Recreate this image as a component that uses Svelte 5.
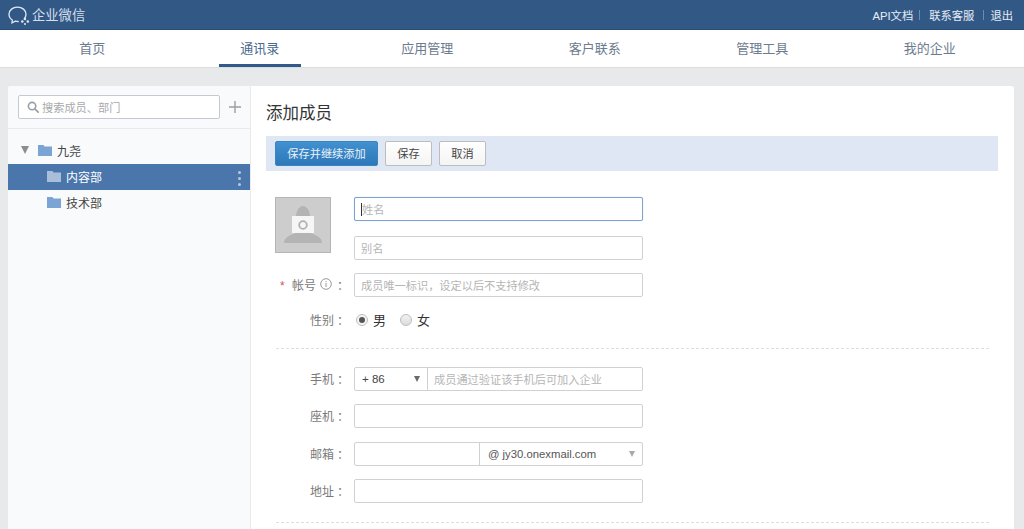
<script>
  const tabs = ['首页', '通讯录', '应用管理', '客户联系', '管理工具', '我的企业'];
</script>

<div class="page">
  <header class="top">
    <div class="brand">
      <svg class="logo" width="24" height="20" viewBox="0 0 24 20" fill="none" stroke="#dfe8f2" stroke-width="1.3">
        <path d="M16.200 14.100C17.200 12.800 18 11.500 18 9.300 18 5.100 14.200 2.100 9.500 2.100S1 5.100 1 9.300c0 2.500 1.300 4.500 3.300 5.700L4 17.800l3.200-1.700c1 .3 2 .4 3 .4" stroke-linecap="round"/>
        <circle cx="14.300" cy="16.500" r="1.300" fill="#dfe8f2" stroke="none"/>
        <circle cx="19.800" cy="16.500" r="1.300" fill="#dfe8f2" stroke="none"/>
        <circle cx="17" cy="14" r="1.200" fill="#dfe8f2" stroke="none"/>
        <circle cx="17" cy="19" r="1" fill="#dfe8f2" stroke="none"/>
      </svg>
      <span>企业微信</span>
    </div>
    <div class="links">
      <span>API文档</span><i></i><span>联系客服</span><i class="alt"></i><span>退出</span>
    </div>
  </header>

  <nav class="tabs">
    {#each tabs as t, i}
      <div class="tab" class:active={i === 1}><span>{t}</span></div>
    {/each}
  </nav>

  <main class="card">
    <aside class="side">
      <div class="search-row">
        <div class="search">
          <svg width="12" height="12" viewBox="0 0 13 13" fill="none" stroke="#9a9fa6" stroke-width="1.800">
            <circle cx="5.500" cy="5.500" r="4"/><path d="M8.500 8.500l3.600 3.600" stroke-linecap="round"/>
          </svg>
          <span>搜索成员、部门</span>
        </div>
        <svg class="plus" width="12" height="12" viewBox="0 0 12 12" stroke="#9a9fa6" stroke-width="1.400"><path d="M6 0v12M0 6h12"/></svg>
      </div>
      <div class="tree">
        <div class="node root">
          <span class="tri"></span>
          <svg class="folder" width="14" height="12" viewBox="0 0 14 12"><path d="M0 1h5.500l1 1.500H14V12H0z" fill="#7ba3d3"/></svg>
          <span>九尧</span>
        </div>
        <div class="node child sel">
          <svg class="folder" width="14" height="12" viewBox="0 0 14 12"><path d="M0 1h5.500l1 1.500H14V12H0z" fill="#a9bfd9"/></svg>
          <span>内容部</span>
          <div class="dots"><b></b><b></b><b></b></div>
        </div>
        <div class="node child">
          <svg class="folder" width="14" height="12" viewBox="0 0 14 12"><path d="M0 1h5.500l1 1.500H14V12H0z" fill="#7ba3d3"/></svg>
          <span>技术部</span>
        </div>
      </div>
    </aside>

    <section class="content">
      <h1>添加成员</h1>
      <div class="toolbar">
        <button class="btn primary">保存并继续添加</button>
        <button class="btn">保存</button>
        <button class="btn">取消</button>
      </div>

      <div class="form">
        <div class="identity">
          <div class="avatar">
            <svg width="56" height="56" viewBox="0 0 56 56">
              <rect width="56" height="56" fill="#cdcdcd"/>
              <path d="M21 20c0-6 3-11 7-11s7 5 7 11v6H21z" fill="#b4b4b4"/>
              <path d="M9 46c0-5 5-8 12-10h14c7 2 12 5 12 10z" fill="#b4b4b4"/>
              <rect x="17" y="19" width="22" height="17" fill="#f6f6f6"/>
              <circle cx="28" cy="28" r="3.800" fill="none" stroke="#b0b0b0" stroke-width="1.800"/>
            </svg>
          </div>
          <div class="names">
            <div class="input focus"><i class="caret"></i><span class="ph">姓名</span></div>
            <div class="input"><span class="ph">别名</span></div>
          </div>
        </div>

        <div class="row r-account">
          <label><em>*</em><span class="lt">帐号</span><svg class="info" width="12" height="12" viewBox="0 0 12 12" fill="none" stroke="#9a9a9a"><circle cx="6" cy="6" r="5.300"/><path d="M6 5v4M6 3v1"/></svg><span class="colon">：</span></label>
          <div class="input"><span class="ph">成员唯一标识，设定以后不支持修改</span></div>
        </div>

        <div class="row r-gender">
          <label><span class="lt">性别</span><span class="colon">：</span></label>
          <div class="radios">
            <span class="radio on"></span><span class="rtext">男</span>
            <span class="radio"></span><span class="rtext">女</span>
          </div>
        </div>

        <div class="dash first"></div>

        <div class="row">
          <label><span class="lt">手机</span><span class="colon">：</span></label>
          <div class="input split">
            <div class="code"><span>+ 86</span><span class="arrow dark"></span></div>
            <span class="ph phone">成员通过验证该手机后可加入企业</span>
          </div>
        </div>
        <div class="row gap">
          <label><span class="lt">座机</span><span class="colon">：</span></label>
          <div class="input"></div>
        </div>
        <div class="row gap2">
          <label><span class="lt">邮箱</span><span class="colon">：</span></label>
          <div class="input split">
            <div class="mail-left"></div>
            <div class="domain"><span>@ jy30.onexmail.com</span><span class="arrow"></span></div>
          </div>
        </div>
        <div class="row gap">
          <label><span class="lt">地址</span><span class="colon">：</span></label>
          <div class="input"></div>
        </div>
        <div class="dash last"></div>
      </div>
    </section>
  </main>
</div>

<style>
  :global(body) {
    margin: 0;
    background: #e8e9eb;
    overflow: hidden;
  }
  .page {
    height: 529px;
    overflow: hidden;
    font-family: "Liberation Sans", "Noto Sans CJK SC", sans-serif;
    font-size: 12px;
    color: #555;
  }
  .top {
    height: 29px;
    background: #325986;
    border-bottom: 1px solid #2b4d75;
    display: flex;
    align-items: center;
    justify-content: space-between;
    padding: 0 11px 0 8px;
    color: #e6edf5;
  }
  .brand {
    display: flex;
    align-items: center;
    font-size: 13.300px;
    color: #d5dfeb;
  }
  .logo { margin-top: 1px; }
  .links {
    display: flex;
    align-items: center;
    font-size: 11.300px;
  }
  .links i {
    width: 1px;
    height: 10px;
    background: #6f8cae;
    margin: 0 9px 0 6px;
  }
  .links i.alt { margin: 0 6px 0 9px; }
  .tabs {
    height: 37px;
    background: #fff;
    border-bottom: 1px solid #dcdcdc;
    display: grid;
    grid-template-columns: repeat(6, 1fr);
    padding: 0 10.500px 0 8.500px;
  }
  .tab {
    display: flex;
    justify-content: center;
    align-items: center;
    font-size: 13px;
    color: #6c7b8e;
    position: relative;
    padding-bottom: 2px;
    box-sizing: border-box;
  }
  .tab.active { color: #4a6a90; }
  .tab.active::after {
    content: "";
    position: absolute;
    left: calc(50% - 41px);
    width: 82px;
    bottom: 0;
    height: 3px;
    background: #2f5a8a;
  }
  .card {
    margin: 18px 10px 0 8px;
    height: 460px;
    background: #fff;
    border-radius: 3px;
    display: flex;
  }
  .side {
    width: 242px;
    flex: none;
    background: #f9fafb;
    border-right: 1px solid #e8e9eb;
    border-radius: 3px 0 0 0;
    box-sizing: content-box;
  }
  .search-row {
    height: 42px;
    border-bottom: 1px solid #e9eaec;
    display: flex;
    align-items: center;
    padding: 0 9px 0 10px;
    justify-content: space-between;
  }
  .search {
    width: 202px;
    height: 24px;
    background: #fff;
    border: 1px solid #c4cad3;
    border-radius: 2px;
    display: flex;
    align-items: center;
    gap: 3px;
    padding-left: 8px;
    color: #a7a9ad;
    font-size: 11.200px;
    box-sizing: border-box;
  }
  .tree { padding-top: 9px; }
  .node {
    height: 26px;
    display: flex;
    align-items: center;
    color: #444;
    font-size: 12px;
    position: relative;
    box-sizing: border-box;
    padding-bottom: 2px;
  }
  .root { padding-left: 13px; }
  .tri {
    width: 0; height: 0;
    border-left: 4px solid transparent;
    border-right: 4px solid transparent;
    border-top: 8px solid #8a8e94;
    margin-right: 9px;
  }
  .root .folder { margin-right: 5px; }
  .child { padding-left: 39px; }
  .child .folder { margin-right: 5px; }
  .sel {
    background: #4a76ac;
    color: #fff;
  }
  .dots {
    position: absolute;
    right: 9px;
    top: 7px;
    display: flex;
    flex-direction: column;
    gap: 3px;
  }
  .dots b {
    width: 3px; height: 3px;
    border-radius: 50%;
    background: #b9c9dc;
  }
  .content {
    flex: 1;
    padding: 0 16px 0 15px;
    min-width: 0;
  }
  h1 {
    margin: 0;
    padding-top: 17px;
    height: 33px;
    line-height: 20px;
    font-weight: 400;
    font-size: 16.500px;
    color: #333;
    box-sizing: content-box;
  }
  .toolbar {
    height: 35px;
    background: #dee7f3;
    display: flex;
    align-items: center;
    padding-left: 9px;
    gap: 7px;
  }
  .btn {
    height: 25px;
    width: 47px;
    padding: 0 0 2px;
    font: inherit;
    font-size: 11.200px;
    color: #444;
    background: linear-gradient(#fff, #f4f4f4);
    border: 1px solid #bdbdbd;
    border-radius: 2px;
  }
  .btn.primary {
    width: 103px;
    color: #eaf2fa;
    background: linear-gradient(#4190d0, #2d78b8);
    border-color: #3a84c0;
  }
  .form { padding: 26px 0 0 9px; }
  .identity {
    display: flex;
    gap: 23px;
    align-items: flex-start;
  }
  .avatar {
    width: 56px;
    height: 56px;
    outline: 1px solid #b5b5b5;
    outline-offset: -1px;
    position: relative;
  }
  .avatar svg { display: block; }
  .names {
    display: flex;
    flex-direction: column;
    gap: 15px;
  }
  .input {
    width: 289px;
    height: 24px;
    box-sizing: border-box;
    border: 1px solid #cfd1d4;
    border-radius: 2px;
    background: #fff;
    display: flex;
    align-items: center;
    padding-left: 6px;
    position: relative;
  }
  .input.focus {
    border-color: #7da3d1;
    box-shadow: 0 0 1px #a9c4e4;
  }
  .caret {
    width: 1px;
    height: 13px;
    background: #333;
  }
  .ph {
    color: #b5b5b5;
    font-size: 11.200px;
    padding-bottom: 1px;
  }
  .row {
    display: flex;
    align-items: center;
    height: 24px;
  }
  .row label {
    width: 79px;
    flex: none;
    display: flex;
    align-items: center;
    justify-content: flex-end;
    font-size: 12px;
    color: #7a7a7a;
    position: relative;
    padding-bottom: 2px;
    box-sizing: border-box;
  }
  .colon {
    width: 20px;
    text-align: left;
    padding-left: 3px;
    box-sizing: border-box;
    font-size: 12px;
  }
  .row label em {
    position: absolute;
    left: 5px;
    top: 3px;
    color: #d9534f;
    font-style: normal;
    font-size: 12px;
  }
  .info { margin-left: 4px; margin-right: 2px; }
  .r-account { margin-top: 13px; }
  .r-gender { margin-top: 11px; }
  .radios {
    display: flex;
    align-items: center;
    color: #333;
    font-size: 13px;
    padding-bottom: 1px;
  }
  .radio {
    width: 10px;
    height: 10px;
    border: 1px solid #bdbdbd;
    border-radius: 50%;
    background: linear-gradient(#f2f2f2, #dcdcdc);
    margin: 0 1px 0 2px;
    position: relative;
  }
  .radio.on { background: #f5f5f5; }
  .radio.on::after {
    content: "";
    position: absolute;
    inset: 2px;
    border-radius: 50%;
    background: #555;
  }
  .rtext { margin: 0 12px 0 4px; }
  .dash {
    width: 713px;
    border-top: 1px dashed #dedede;
    margin-left: 1px;
  }
  .dash.first { margin-top: 16px; margin-bottom: 18px; }
  .dash.last { margin-top: 19px; }
  .gap { margin-top: 13px; }
  .gap2 { margin-top: 14px; }
  .split { padding-left: 0; }
  .code {
    width: 73px;
    height: 100%;
    border-right: 1px solid #cfd1d4;
    display: flex;
    align-items: center;
    justify-content: space-between;
    padding: 0 7px;
    box-sizing: border-box;
    flex: none;
    color: #444;
    font-size: 11.500px;
  }
  .phone { padding-left: 6px; }
  .mail-left { width: 124px; height: 100%; border-right: 1px solid #cfd1d4; flex: none; }
  .domain {
    flex: 1;
    display: flex;
    justify-content: space-between;
    align-items: center;
    padding: 0 7px 0 8px;
    color: #555;
    font-size: 11.300px;
  }
  .arrow {
    width: 0; height: 0;
    border-left: 3px solid transparent;
    border-right: 3px solid transparent;
    border-top: 6px solid #a9a9a9;
  }
  .arrow.dark { border-top-color: #6a6a6a; }
</style>
